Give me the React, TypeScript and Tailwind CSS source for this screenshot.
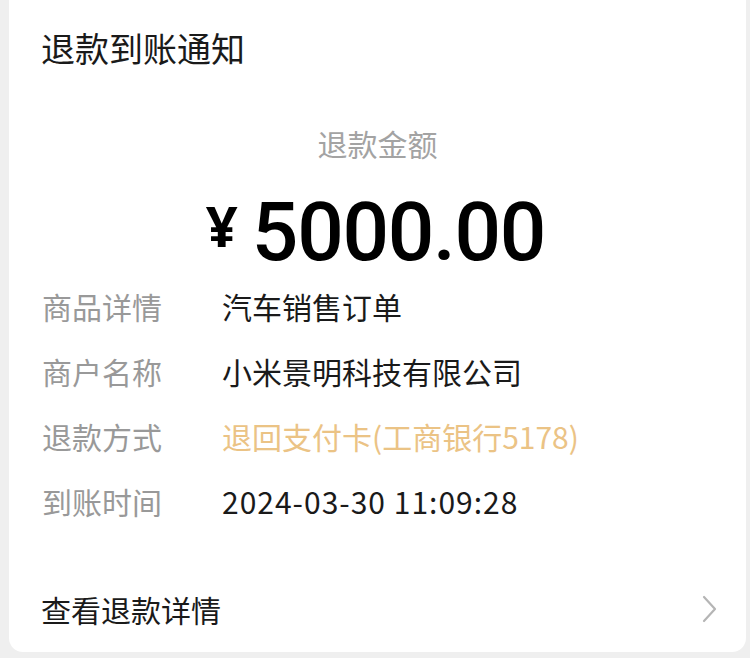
import React from "react";

const cjk = { fontFamily: '"Noto Sans CJK SC", "Noto Sans", sans-serif' };

const rows: { label: string; value: string; accent?: boolean; mono?: boolean }[] = [
  { label: "商品详情", value: "汽车销售订单" },
  { label: "商户名称", value: "小米景明科技有限公司" },
  { label: "退款方式", value: "退回支付卡(工商银行5178)", accent: true },
  { label: "到账时间", value: "2024-03-30 11:09:28", mono: true },
];

export default function App() {
  return (
    <div className="w-[750px] h-[658px] bg-[#efefef] pl-[9px] pr-[4px] pb-[6px] overflow-hidden" style={cjk}>
      <div className="h-[652px] bg-white rounded-b-[14px] flex flex-col">
        <div className="h-[96px] flex items-center pl-[32px] text-[34px] text-[#1a1a1a] leading-none">
          退款到账通知
        </div>
        <div className="h-[94px] flex items-center justify-center text-[30px] text-[#a3a3a3] leading-none">
          退款金额
        </div>
        <div className="h-[83px] flex items-center justify-center text-black leading-none">
          <span className="text-[56px] font-bold mr-[14px] mt-[-14px] ml-[-4px]" style={{ fontFamily: '"Noto Sans", sans-serif' }}>¥</span>
          <span className="text-[82px] font-medium tracking-[-1.3px]" style={{ fontFamily: 'Roboto, sans-serif' }}>5000.00</span>
        </div>
        <div className="flex flex-col">
          {rows.map((r) => (
            <div key={r.label} className="h-[65px] flex items-center pl-[33px] text-[30px] leading-none">
              <span className="w-[180px] text-[#999999]">{r.label}</span>
              <span className={(r.accent ? "text-[#ebc385]" : "text-[#1a1a1a]") + (r.mono ? " tracking-[1px]" : "")}>{r.value}</span>
            </div>
          ))}
        </div>
        <div className="mt-auto h-[86px] flex items-center justify-between pl-[32px] pr-[28px] text-[30px] text-[#1a1a1a] leading-none">
          <span>查看退款详情</span>
          <svg width="16" height="28" viewBox="0 0 16 28" fill="none">
            <polyline points="2,2 13,14 2,26" stroke="#b5b5b5" strokeWidth="2.2" strokeLinecap="round" strokeLinejoin="round" />
          </svg>
        </div>
      </div>
    </div>
  );
}
